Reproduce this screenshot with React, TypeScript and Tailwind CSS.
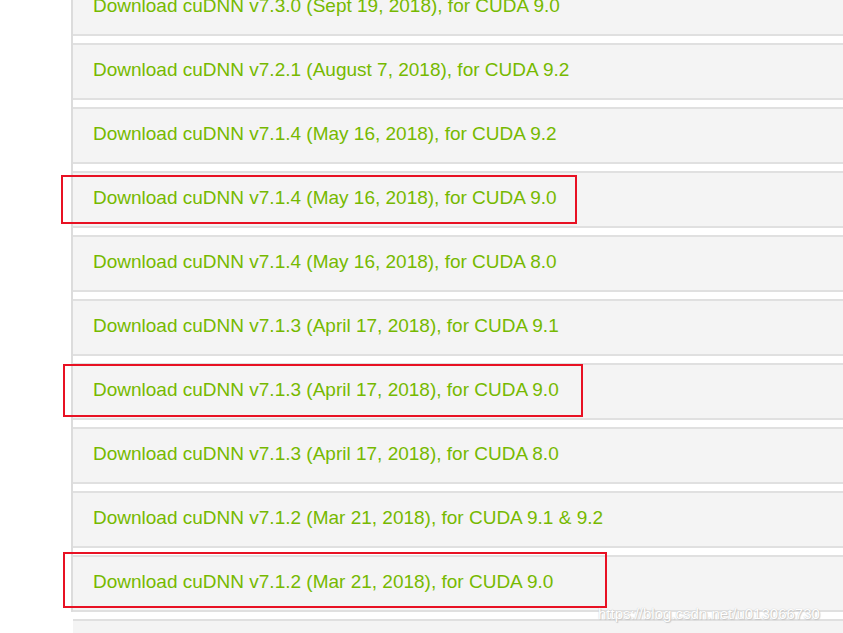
const releases = [
  "Download cuDNN v7.3.0 (Sept 19, 2018), for CUDA 9.0",
  "Download cuDNN v7.2.1 (August 7, 2018), for CUDA 9.2",
  "Download cuDNN v7.1.4 (May 16, 2018), for CUDA 9.2",
  "Download cuDNN v7.1.4 (May 16, 2018), for CUDA 9.0",
  "Download cuDNN v7.1.4 (May 16, 2018), for CUDA 8.0",
  "Download cuDNN v7.1.3 (April 17, 2018), for CUDA 9.1",
  "Download cuDNN v7.1.3 (April 17, 2018), for CUDA 9.0",
  "Download cuDNN v7.1.3 (April 17, 2018), for CUDA 8.0",
  "Download cuDNN v7.1.2 (Mar 21, 2018), for CUDA 9.1 & 9.2",
  "Download cuDNN v7.1.2 (Mar 21, 2018), for CUDA 9.0",
  "Download cuDNN v7.1.1 (Feb 28, 2018), for CUDA 9.1",
];

// rows the screenshot author boxed in red
const marked: Record<number, string> = {
  3: "w-[516px] h-[49px] -left-[12px] top-[2px]",
  6: "w-[520px] h-[53px] -left-[10px] -top-[1px]",
  9: "w-[544px] h-[56px] -left-[10px] -top-[5px]",
};

export default function App() {
  return (
    <div className="relative h-[633px] w-[843px] overflow-hidden bg-white" style={{ fontFamily: '"Liberation Sans", Arial, sans-serif' }}>
      <div className="ml-[71px] border-l-2 border-[#dcdcdc] h-full">
        <div className="-mt-[21px] flex flex-col gap-[7px]">
          {releases.map((r, i) => (
            <div key={i} className="relative h-[57px] border-y-2 border-[#e0e0e0] bg-[#f4f4f4] pl-[20px] pb-[4px] flex items-center">
              <a className="text-[19px] text-[#76b900] leading-none whitespace-nowrap">{r}</a>
              {marked[i] && <div className={`absolute border-2 border-[#e81123] ${marked[i]}`} />}
            </div>
          ))}
        </div>
      </div>
      <div
        className="absolute left-[598px] top-[603px] text-[15px] text-white whitespace-nowrap"
        style={{ fontFamily: '"Liberation Sans", Arial, sans-serif', textShadow: "0 0 1px #b8b8b8, 1px 1px 1px #c8c8c8" }}
      >
        https://blog.csdn.net/u013066730
      </div>
    </div>
  );
}
